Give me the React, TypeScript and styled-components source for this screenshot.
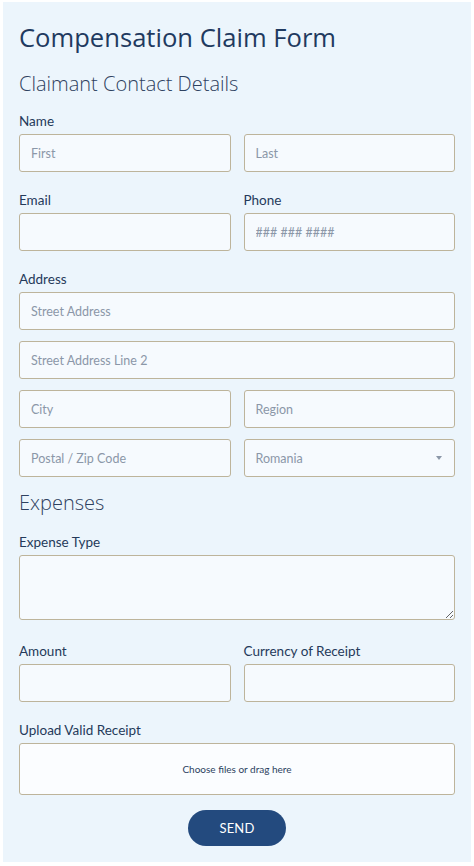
import styled, { createGlobalStyle } from "styled-components"

const GlobalStyle = createGlobalStyle`
  html, body {
    margin: 0;
    padding: 0;
    background: #ffffff;
  }
  * {
    box-sizing: border-box;
  }
`

const App: React.FC = () => {
  return (
    <>
      <GlobalStyle />
      <Panel>
        <Title>Compensation Claim Form</Title>
        <Heading>Claimant Contact Details</Heading>

        <Field $top={15}>
          <Label>Name</Label>
          <Row>
            <Input placeholder="First" />
            <Input placeholder="Last" />
          </Row>
        </Field>

        <Row $top={19}>
          <Field>
            <Label>Email</Label>
            <Input />
          </Field>
          <Field>
            <Label>Phone</Label>
            <Input placeholder="### ### ####" />
          </Field>
        </Row>

        <Field $top={19}>
          <Label>Address</Label>
          <Stack>
            <Input placeholder="Street Address" />
            <Input placeholder="Street Address Line 2" />
            <Row>
              <Input placeholder="City" />
              <Input placeholder="Region" />
            </Row>
            <Row>
              <Input placeholder="Postal / Zip Code" />
              <SelectBox>
                <span>Romania</span>
                <Caret />
              </SelectBox>
            </Row>
          </Stack>
        </Field>

        <Heading $top={13}>Expenses</Heading>

        <Field $top={17}>
          <Label>Expense Type</Label>
          <TextArea />
        </Field>

        <Row $top={22}>
          <Field>
            <Label>Amount</Label>
            <Input />
          </Field>
          <Field>
            <Label>Currency of Receipt</Label>
            <Input />
          </Field>
        </Row>

        <Field $top={19}>
          <Label>Upload Valid Receipt</Label>
          <Upload>Choose files or drag here</Upload>
        </Field>

        <Actions>
          <SendButton>SEND</SendButton>
        </Actions>
      </Panel>
    </>
  )
}

export default App

const Panel = styled.div`
  margin: 2px 3px 4px 3px;
  padding: 20px 16px 16px;
  background: #ecf5fc;
  font-family: "Lato", "Open Sans", sans-serif;
  color: #2b3f5e;
  display: flex;
  flex-direction: column;
`

const Title = styled.h1`
  margin: 0;
  font-family: "Open Sans", sans-serif;
  font-weight: 400;
  font-size: 25.6px;
  line-height: 32px;
  color: #1f3a60;
`

const Heading = styled.h2<{ $top?: number }>`
  margin: ${(p) => p.$top ?? 17}px 0 0;
  font-family: "Open Sans", sans-serif;
  font-weight: 300;
  font-size: 20px;
  line-height: 26px;
  color: #2e4160;
`

const Field = styled.div<{ $top?: number }>`
  margin-top: ${(p) => p.$top ?? 0}px;
  display: flex;
  flex-direction: column;
  gap: 4px;
  min-width: 0;
`

const Label = styled.label`
  font-size: 13.5px;
  line-height: 18px;
  font-weight: 400;
  color: #253a5a;
`

const Row = styled.div<{ $top?: number }>`
  margin-top: ${(p) => p.$top ?? 0}px;
  display: grid;
  grid-template-columns: 1fr 1fr;
  column-gap: 13px;
`

const Stack = styled.div`
  display: flex;
  flex-direction: column;
  gap: 11px;
`

const Input = styled.input`
  width: 100%;
  height: 38px;
  padding: 0 11px;
  border: 1px solid #bdb49b;
  border-radius: 3px;
  background: #f6fafe;
  font-family: "Lato", sans-serif;
  font-size: 12.5px;
  color: #2b3f5e;
  outline: none;
  &::placeholder {
    color: #8b97a8;
  }
`

const SelectBox = styled.div`
  height: 38px;
  padding: 0 11px;
  border: 1px solid #bdb49b;
  border-radius: 3px;
  background: #f6fafe;
  display: flex;
  align-items: center;
  justify-content: space-between;
  font-size: 12.5px;
  color: #8b97a8;
`

const Caret = styled.span`
  width: 0;
  height: 0;
  border-left: 3.5px solid transparent;
  border-right: 3.5px solid transparent;
  border-top: 4px solid #8b97a8;
  margin-right: 1px;
`

const TextArea = styled.textarea`
  width: 100%;
  height: 65px;
  border: 1px solid #bdb49b;
  border-radius: 3px;
  background: #f6fafe;
  resize: vertical;
  outline: none;
  font-family: "Lato", sans-serif;
`

const Upload = styled.div`
  height: 52px;
  border: 1px solid #bdb49b;
  border-radius: 3px;
  background: #fbfdff;
  display: flex;
  align-items: center;
  justify-content: center;
  font-size: 10px;
  color: #2b3f5e;
`

const Actions = styled.div`
  margin-top: 15px;
  display: flex;
  justify-content: center;
`

const SendButton = styled.button`
  width: 98px;
  height: 36px;
  border: none;
  border-radius: 18px;
  background: #234a7e;
  color: #ffffff;
  font-family: "Lato", sans-serif;
  font-size: 13px;
  letter-spacing: 0.2px;
`
